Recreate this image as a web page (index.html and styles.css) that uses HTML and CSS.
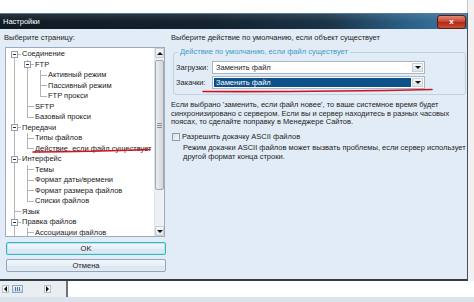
FILE: index.html
```html
<!DOCTYPE html>
<html lang="ru">
<head>
<meta charset="utf-8">
<title>Настройки</title>
<link rel="stylesheet" href="styles.css">
</head>
<body>
<div class="screen">
  <div class="top"><div class="top-fill"></div><div class="top-edge"></div></div>
  <div class="win-row">
    <div class="dialog">
      <div class="titlebar">
        <span class="title">Настройки</span>
        <span class="close">x</span>
      </div>
      <div class="dlg-body">
        <div class="left">
          <div class="pick-label">Выберите страницу:</div>
          <div class="tree">
            <div class="items">
              <div class="row"><span class="c xb"><i class="bx"></i></span><span class="tx">Соединение</span></div>
              <div class="row"><span class="c v"></span><span class="c t"><i class="bx"></i></span><span class="tx">FTP</span></div>
              <div class="row"><span class="c v"></span><span class="c v"></span><span class="c t"></span><span class="tx">Активный режим</span></div>
              <div class="row"><span class="c v"></span><span class="c v"></span><span class="c t"></span><span class="tx">Пассивный режим</span></div>
              <div class="row"><span class="c v"></span><span class="c v"></span><span class="c l"></span><span class="tx">FTP прокси</span></div>
              <div class="row"><span class="c v"></span><span class="c t"></span><span class="tx">SFTP</span></div>
              <div class="row"><span class="c v"></span><span class="c l"></span><span class="tx">Базовый прокси</span></div>
              <div class="row"><span class="c t"><i class="bx"></i></span><span class="tx">Передачи</span></div>
              <div class="row"><span class="c v"></span><span class="c t"></span><span class="tx">Типы файлов</span></div>
              <div class="row"><span class="c v"></span><span class="c l"></span><span class="tx">Действие, если файл существует</span></div>
              <div class="row"><span class="c t"><i class="bx"></i></span><span class="tx">Интерфейс</span></div>
              <div class="row"><span class="c v"></span><span class="c t"></span><span class="tx">Темы</span></div>
              <div class="row"><span class="c v"></span><span class="c t"></span><span class="tx">Формат даты/времени</span></div>
              <div class="row"><span class="c v"></span><span class="c t"></span><span class="tx">Формат размера файлов</span></div>
              <div class="row"><span class="c v"></span><span class="c l"></span><span class="tx">Списки файлов</span></div>
              <div class="row"><span class="c t"></span><span class="tx">Язык</span></div>
              <div class="row"><span class="c t"><i class="bx"></i></span><span class="tx">Правка файлов</span></div>
              <div class="row"><span class="c v"></span><span class="c t"></span><span class="tx">Ассоциации файлов</span></div>
            </div>
            <div class="vs">
              <div class="vs-btn"><i class="tri-up"></i></div>
              <div class="vs-thumb"><i class="grip"></i></div>
              <div class="vs-track"></div>
              <div class="vs-btn"><i class="tri-down"></i></div>
            </div>
          </div>
          <div class="btn ok">OK</div>
          <div class="btn cancel">Отмена</div>
        </div>
        <div class="right">
          <div class="hdr">Выберите действие по умолчанию, если объект существует</div>
          <fieldset class="grp">
            <legend>Действие по умолчанию, если файл существует</legend>
            <div class="frow">
              <span class="flabel">Загрузки:</span>
              <div class="combo"><span class="ctext">Заменить файл</span><span class="cbtn"><i class="tri-down"></i></span></div>
            </div>
            <div class="frow gap">
              <span class="flabel">Закачки:</span>
              <div class="combo"><span class="ctext sel">Заменить файл</span><span class="cbtn"><i class="tri-down"></i></span></div>
            </div>
          </fieldset>
          <p class="note">Если выбрано 'заменить, если файл новее', то ваше системное время будет<br>синхронизировано с сервером. Если вы и сервер находитесь в разных часовых<br>поясах, то сделайте поправку в Менеджере Сайтов.</p>
          <div class="check"><span class="cb"></span><span>Разрешить докачку ASCII файлов</span></div>
          <p class="desc">Режим докачки ASCII файлов может вызвать проблемы, если сервер использует<br>другой формат конца строки.</p>
        </div>
      </div>
    </div>
    <div class="side"></div>
  </div>
  <div class="taskbar">
    <div class="hs">
      <span class="hs-btn"><i class="tri-left"></i></span>
      <span class="hs-thumb"><i class="hgrip"></i></span>
      <span class="hs-gap"></span>
      <span class="hs-btn"><i class="tri-right"></i></span>
    </div>
    <div class="tb-white"></div>
  </div>
  <div class="bottom-strip"></div>
  <svg class="annot" width="474" height="302" viewBox="0 0 474 302">
    <path d="M33 152 Q90 151.5 150 149.5" fill="none" stroke="#d3121c" stroke-width="1.6" stroke-linecap="round"/>
    <path d="M203 91.5 Q320 92 432 89.5" fill="none" stroke="#d3121c" stroke-width="1.6" stroke-linecap="round"/>
  </svg>
</div>
</body>
</html>
```

FILE: styles.css
```css
* { box-sizing: border-box; margin: 0; padding: 0; }
html, body { width: 474px; height: 302px; overflow: hidden; background: #fff; }
body {
  font-family: "Liberation Sans", Arial, sans-serif;
  font-size: 7.5px;
  line-height: 10px;
  color: #1d1d1d;
}
.screen { position: relative; display: flex; flex-direction: column; width: 474px; height: 302px; }

.top { height: 13px; flex: none; display: flex; }
.top-fill { flex: 1; background: #fff; }
.top-edge { width: 7px; border-left: 1px solid #c6c6c6; background: #f2f2f2; }

.win-row { height: 268px; flex: none; display: flex; }
.dialog {
  width: 468px; flex: none; display: flex; flex-direction: column;
  border-right: 1px solid #4b5056; border-bottom: 2px solid #373c42;
}
.side { flex: 1; background: #f1f1f1; }

.titlebar {
  height: 16px; flex: none; display: flex; align-items: center; justify-content: space-between;
  padding-left: 3px;
  border-top: 1px solid #4f7fa0;
  background:
    linear-gradient(rgba(255,255,255,0.10), rgba(255,255,255,0) 55%),
    linear-gradient(to right, #0f1b25 0%, #13222f 45%, #1a3347 70%, #2c628a 88%, #3b79a3 100%);
}
.title { color: #fff; font-size: 7.5px; }
.close {
  width: 29px; height: 14px; margin-right: 1px;
  display: flex; align-items: center; justify-content: center;
  color: #fff; font-weight: bold; font-size: 8px;
  border: 1px solid #5b1a12; border-radius: 3px;
  background: linear-gradient(#e18a74, #c9402c 50%, #b02716 51%, #c5513a);
}

.dlg-body { flex: 1; display: flex; background: #e2ecf7; padding: 4px 0 0 4px; }

.left { width: 162px; flex: none; display: flex; flex-direction: column; }
.pick-label { height: 10px; }
.tree {
  margin-top: 4px; margin-left: 1px; width: 160px; height: 190px;
  border: 1px solid #9bacbe; background: #fff; display: flex;
}
.items { flex: 1; overflow: hidden; padding: 1px 0 0 2px; }
.row { height: 10.5px; display: flex; align-items: center; white-space: nowrap; color: #222; }
.c { width: 13px; height: 100%; flex: none; display: flex; align-items: center; justify-content: center; }
.v { background: linear-gradient(#b4b4b4, #b4b4b4) no-repeat 6px 0 / 1px 100%; }
.t {
  background:
    linear-gradient(#b4b4b4, #b4b4b4) no-repeat 6px 0 / 1px 100%,
    linear-gradient(#b4b4b4, #b4b4b4) no-repeat 6px 50% / 7px 1px;
}
.l {
  background:
    linear-gradient(#b4b4b4, #b4b4b4) no-repeat 6px 0 / 1px 50%,
    linear-gradient(#b4b4b4, #b4b4b4) no-repeat 6px 50% / 7px 1px;
}
.xb {
  background:
    linear-gradient(#b4b4b4, #b4b4b4) no-repeat 6px 100% / 1px 50%,
    linear-gradient(#b4b4b4, #b4b4b4) no-repeat 6px 50% / 7px 1px;
}
.bx {
  width: 7px; height: 7px; display: block;
  border: 1px solid #8e9eb0; background: #fff;
  background-image: linear-gradient(#2c2c2c, #2c2c2c);
  background-repeat: no-repeat; background-position: 1px 2px; background-size: 3px 1px;
}
.tx { padding-left: 1px; }

.vs {
  width: 10px; flex: none; display: flex; flex-direction: column;
  background: #eef1f4; border-left: 1px solid #e0e4e8;
}
.vs-btn {
  height: 10px; flex: none; display: flex; align-items: center; justify-content: center;
  border: 1px solid #c4ccd4; background: linear-gradient(#f8f8f8, #e2e5e8); border-radius: 1px;
}
.vs-thumb {
  margin-top: 2px; height: 130px; flex: none;
  border: 1px solid #a2a9b0; border-radius: 2px;
  background: linear-gradient(to right, #eceeef, #d4d7da);
  display: flex; align-items: center; justify-content: center;
}
.grip { width: 5px; height: 5px; display: block; background: repeating-linear-gradient(#8b9198 0 1px, transparent 1px 2px); }
.vs-track { flex: 1; }
.tri-up { display: block; width: 0; height: 0; border-left: 3px solid transparent; border-right: 3px solid transparent; border-bottom: 3px solid #151515; }
.tri-down { display: block; width: 0; height: 0; border-left: 3px solid transparent; border-right: 3px solid transparent; border-top: 3px solid #151515; }
.tri-left { display: block; width: 0; height: 0; border-top: 3px solid transparent; border-bottom: 3px solid transparent; border-right: 3px solid #151515; }
.tri-right { display: block; width: 0; height: 0; border-top: 3px solid transparent; border-bottom: 3px solid transparent; border-left: 3px solid #151515; }

.btn {
  margin-left: 2px; width: 160px; height: 13px;
  display: flex; align-items: center; justify-content: center;
  border: 1px solid #8ea5bc; border-radius: 2px;
  background: linear-gradient(#f4f8fc, #e6eef6 50%, #d9e4ef 51%, #e3ebf4);
  color: #1d1d1d;
}
.ok { margin-top: 5px; border-color: #37b5c6; box-shadow: inset 0 0 0 1px #b8e8ee; }
.cancel { margin-top: 4px; }

.right { margin-left: 5px; width: 296px; flex: none; display: flex; flex-direction: column; }
.hdr { height: 10px; white-space: nowrap; }
.grp {
  margin: 4px 1px 0 2px;
  border: 1px solid #c2d1df; border-radius: 3px;
  padding: 4px 6px 5px 2px;
  min-width: 0;
}
.grp legend {
  margin-left: 2px; padding: 0 2px; height: 10px; line-height: 10px;
  color: #3e9ac6; white-space: nowrap;
}
.frow { height: 13px; display: flex; align-items: center; }
.frow.gap { margin-top: 2px; }
.flabel { width: 36px; flex: none; }
.combo {
  width: 213px; height: 13px; display: flex;
  border: 1px solid #a9b8c7; background: #fff;
}
.ctext { flex: 1; display: flex; align-items: center; padding-left: 2px; margin: 1px 0 1px 1px; }
.ctext.sel { background: #0d5189; color: #fff; }
.cbtn {
  width: 11px; flex: none; margin: 1px; display: flex; align-items: center; justify-content: center;
  border: 1px solid #c8d0d8; background: linear-gradient(#f7f7f7, #e0e3e6);
}

.note { margin-top: 6px; line-height: 8.5px; white-space: nowrap; }
.check { margin-top: 6px; height: 9px; display: flex; align-items: center; white-space: nowrap; }
.cb {
  width: 8px; height: 8px; flex: none; margin: 0 2px 0 1px;
  border: 1px solid #8d9db0; background: linear-gradient(135deg, #d7dee6, #f6f8fa);
}
.desc { margin-top: 1px; padding-left: 12px; line-height: 9.5px; white-space: nowrap; }

.taskbar { height: 16px; flex: none; display: flex; }
.hs {
  width: 68px; flex: none; display: flex; align-items: center; padding-left: 2px;
  background: #e9eef3; border-right: 2px solid #6d737a;
}
.hs-btn {
  width: 7px; height: 8px; flex: none; display: flex; align-items: center; justify-content: center;
  border: 1px solid #b8c0c8; background: #f7f7f7;
}
.hs-thumb {
  width: 11px; height: 8px; margin-left: 3px; flex: none; display: flex; align-items: center; justify-content: center;
  border: 1px solid #8fa8c0; background: linear-gradient(#e8f0f8, #c9d9e8);
}
.hgrip { width: 5px; height: 4px; display: block; background: repeating-linear-gradient(to right, #5a7a9a 0 1px, transparent 1px 2px); }
.hs-gap { width: 21px; flex: none; }
.tb-white { flex: 1; background: #fff; }
.bottom-strip { flex: 1; background: #dbe4ed; }

.annot { position: absolute; left: 0; top: 0; pointer-events: none; }
```
